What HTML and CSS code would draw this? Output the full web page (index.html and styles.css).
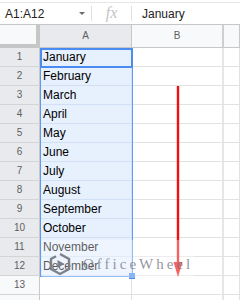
FILE: index.html
```html
<!DOCTYPE html>
<html lang="en">
<head>
  <meta charset="UTF-8" />
  <title>Sheet - A1:A12</title>
  <link rel="stylesheet" href="styles.css">
</head>
<body>

  <div class="formula-bar">
    <div class="name-box">
      <span>A1:A12</span>
      <span class="caret"></span>
    </div>
    <div class="fx">fx</div>
    <div class="formula">January</div>
  </div>

  <div class="sheet">
    <div class="corner"></div>
    <div class="col-head active">A</div>
    <div class="col-head wide">B</div>
    <div class="col-head"></div>

    <div class="row-head active">1</div><div class="cell sel">January</div><div class="cell wide"></div><div class="cell"></div>
    <div class="row-head active">2</div><div class="cell sel">February</div><div class="cell wide"></div><div class="cell"></div>
    <div class="row-head active">3</div><div class="cell sel">March</div><div class="cell wide"></div><div class="cell"></div>
    <div class="row-head active">4</div><div class="cell sel">April</div><div class="cell wide"></div><div class="cell"></div>
    <div class="row-head active">5</div><div class="cell sel">May</div><div class="cell wide"></div><div class="cell"></div>
    <div class="row-head active">6</div><div class="cell sel">June</div><div class="cell wide"></div><div class="cell"></div>
    <div class="row-head active">7</div><div class="cell sel">July</div><div class="cell wide"></div><div class="cell"></div>
    <div class="row-head active">8</div><div class="cell sel">August</div><div class="cell wide"></div><div class="cell"></div>
    <div class="row-head active">9</div><div class="cell sel">September</div><div class="cell wide"></div><div class="cell"></div>
    <div class="row-head active">10</div><div class="cell sel">October</div><div class="cell wide"></div><div class="cell"></div>
    <div class="row-head active">11</div><div class="cell sel">November</div><div class="cell wide"></div><div class="cell"></div>
    <div class="row-head active">12</div><div class="cell sel">December</div><div class="cell wide"></div><div class="cell"></div>
    <div class="row-head">13</div><div class="cell"></div><div class="cell wide"></div><div class="cell"></div>
    <div class="row-head"></div><div class="cell"></div><div class="cell wide"></div><div class="cell"></div>

    <!-- selection range + active cell -->
    <div class="range"></div>
    <div class="active-cell"></div>
    <div class="handle"></div>

    <!-- red arrow drawn over column B -->
    <svg class="arrow" width="12" height="192" viewBox="0 0 12 192">
      <line x1="6" y1="0" x2="6" y2="178" stroke="#f20f0f" stroke-width="2.4"/>
      <polygon points="1.5,176 10.5,176 6,191" fill="#f20f0f"/>
    </svg>

    <!-- watermark -->
    <div class="watermark">
      <svg width="22" height="24" viewBox="0 0 22 24">
        <path d="M11 2 L20 7 L20 17 L11 22 L2 17 L2 7 L7 4.2" fill="none" stroke="#7d8089" stroke-width="2.4"/>
        <polygon points="8.5,8 15.5,12 8.5,16" fill="#7d8089"/>
      </svg>
      <span>OfficeWheel</span>
    </div>
  </div>

</body>
</html>
```

FILE: styles.css
```css
body {
  margin: 0;
  font-family: 'Liberation Sans', Arial, sans-serif;
  background-color: #ffffff;
  color: #000000;
  overflow: hidden;
}
.formula-bar {
  margin-top: 2px;
  height: 21px;
  border-top: 1px solid #e6e6e6;
  border-bottom: 1px solid #c7c7c7;
  display: flex;
  align-items: center;
  font-size: 12px;
  color: #222222;
}
.name-box {
  width: 92px;
  box-sizing: border-box;
  padding: 0 6px 0 5px;
  display: flex;
  align-items: center;
  justify-content: space-between;
  border-right: 1px solid #e0e0e0;
  height: 15px;
}
.caret {
  width: 0;
  height: 0;
  border-left: 3px solid transparent;
  border-right: 3px solid transparent;
  border-top: 3px solid #6b6b6b;
}
.fx {
  width: 40px;
  box-sizing: border-box;
  text-align: center;
  font-family: 'Liberation Serif', serif;
  font-style: italic;
  font-size: 16px;
  color: #c4c4c4;
  border-right: 1px solid #e0e0e0;
  height: 15px;
  line-height: 14px;
}
.formula {
  padding-left: 10px;
}
.sheet {
  position: relative;
  display: grid;
  grid-template-columns: 40px 92px 92px 1fr;
  grid-template-rows: 23px;
  grid-auto-rows: 19px;
}
.corner {
  background-color: #f8f9fa;
  border-right: 4px solid #c6c6c6;
  border-bottom: 4px solid #c6c6c6;
}
.col-head {
  background-color: #f8f9fa;
  border-right: 1px solid #c7c7c7;
  border-bottom: 1px solid #c7c7c7;
  font-size: 10px;
  color: #5f5f5f;
  text-align: center;
  line-height: 22px;
}
.col-head.wide {
  border-right: 2px solid #cfcfcf;
}
.col-head.active {
  background-color: #e8eaed;
}
.row-head {
  background-color: #f8f9fa;
  border-right: 1px solid #c7c7c7;
  border-bottom: 1px solid #d4d4d4;
  font-size: 10px;
  color: #5f5f5f;
  text-align: center;
  line-height: 18px;
}
.row-head.active {
  background-color: #e8eaed;
}
.cell {
  border-right: 1px solid #e2e2e2;
  border-bottom: 1px solid #e2e2e2;
  font-size: 12px;
  line-height: 18px;
  padding-left: 3px;
  white-space: nowrap;
}
.cell.wide {
  border-right: 2px solid #e6e6e6;
}
.cell.sel {
  background-color: #e7f0fd;
  border-right-color: #d2e0f5;
  border-bottom-color: #d2e0f5;
}
.range {
  position: absolute;
  left: 40px;
  top: 23px;
  width: 93px;
  height: 229px;
  box-sizing: border-box;
  border: 1px solid #5f9af0;
}
.active-cell {
  position: absolute;
  left: 40px;
  top: 23px;
  width: 93px;
  height: 20px;
  box-sizing: border-box;
  border: 2px solid #4a8cf0;
}
.handle {
  position: absolute;
  left: 129px;
  top: 248px;
  width: 6px;
  height: 6px;
  background-color: #4a8cf0;
}
.arrow {
  position: absolute;
  left: 172px;
  top: 61px;
}
.watermark {
  position: absolute;
  left: 42px;
  top: 215px;
  width: 152px;
  height: 38px;
  background-color: rgba(255, 255, 255, 0.35);
  display: flex;
  align-items: center;
  padding: 10px 0 0 7px;
  box-sizing: border-box;
  gap: 12px;
}
.watermark span {
  font-family: 'Liberation Serif', serif;
  font-size: 15px;
  letter-spacing: 3px;
  color: rgba(110, 114, 124, 0.75);
}
```
